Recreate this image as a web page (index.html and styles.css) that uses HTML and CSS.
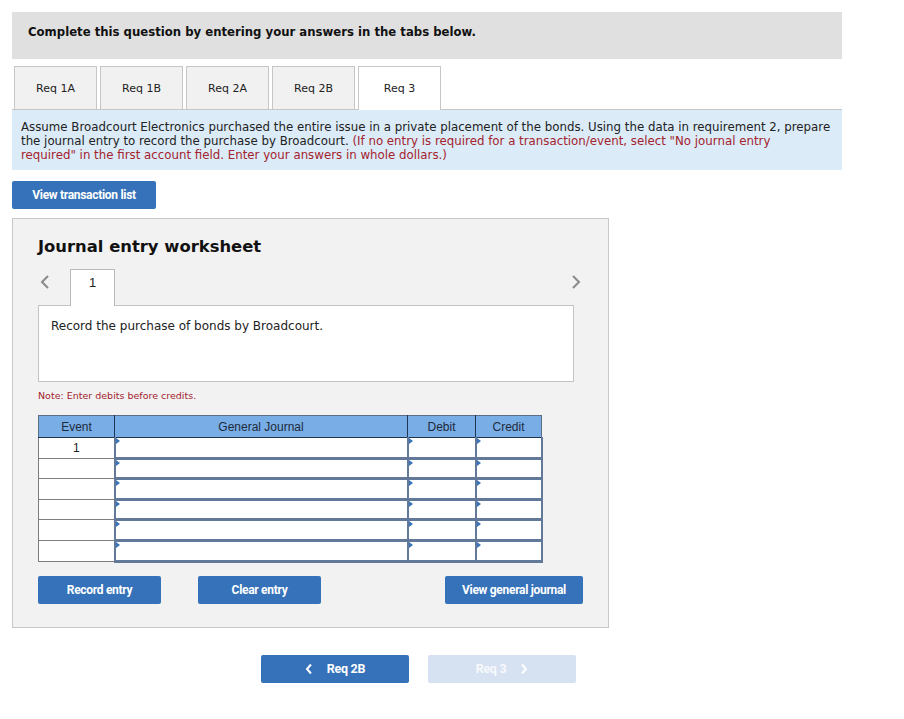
FILE: index.html
```html
<!DOCTYPE html>
<html lang="en">
<head>
<meta charset="utf-8">
<title>Journal entry worksheet</title>
<link rel="stylesheet" href="styles.css">
</head>
<body>
<div class="page">
  <div class="banner">Complete this question by entering your answers in the tabs below.</div>

  <div class="tabs">
    <div class="tab">Req 1A</div>
    <div class="tab">Req 1B</div>
    <div class="tab">Req 2A</div>
    <div class="tab">Req 2B</div>
    <div class="tab active">Req 3</div>
  </div>

  <div class="instructions">Assume Broadcourt Electronics purchased the entire issue in a private placement of the bonds. Using the data in requirement 2, prepare the journal entry to record the purchase by Broadcourt. <span class="red">(If no entry is required for a transaction/event, select "No journal entry<br>required" in the first account field. Enter your answers in whole dollars.)</span></div>

  <button class="btn btn-list">View transaction list</button>

  <div class="panel">
    <h2 class="panel-title">Journal entry worksheet</h2>
    <div class="entry-nav">
      <svg class="chev chev-left" width="12" height="16" viewBox="0 0 12 16"><polyline points="9,2 3,8 9,14" fill="none" stroke="#8a8a8a" stroke-width="2"/></svg>
      <div class="entry-tab">1</div>
      <div class="spacer"></div>
      <svg class="chev chev-right" width="12" height="16" viewBox="0 0 12 16"><polyline points="3,2 9,8 3,14" fill="none" stroke="#8a8a8a" stroke-width="2"/></svg>
    </div>
    <div class="desc">Record the purchase of bonds by Broadcourt.</div>
    <div class="note">Note: Enter debits before credits.</div>

    <table class="journal">
      <thead>
        <tr><th class="c-event">Event</th><th class="c-gj">General Journal</th><th class="c-dr">Debit</th><th class="c-cr">Credit</th></tr>
      </thead>
      <tbody>
        <tr><td class="ev">1</td><td class="in"></td><td class="in"></td><td class="in"></td></tr>
        <tr><td class="ev"></td><td class="in"></td><td class="in"></td><td class="in"></td></tr>
        <tr><td class="ev"></td><td class="in"></td><td class="in"></td><td class="in"></td></tr>
        <tr><td class="ev"></td><td class="in"></td><td class="in"></td><td class="in"></td></tr>
        <tr><td class="ev"></td><td class="in"></td><td class="in"></td><td class="in"></td></tr>
        <tr><td class="ev"></td><td class="in"></td><td class="in"></td><td class="in"></td></tr>
      </tbody>
    </table>

    <div class="actions">
      <button class="btn btn-action">Record entry</button>
      <button class="btn btn-action btn-clear">Clear entry</button>
      <button class="btn btn-action btn-view">View general journal</button>
    </div>
  </div>

  <div class="pager">
    <button class="btn btn-nav"><svg width="8" height="12" viewBox="0 0 8 12"><polyline points="6,1.5 2,6 6,10.5" fill="none" stroke="#fff" stroke-width="2"/></svg><span class="nav-label">Req 2B</span></button>
    <button class="btn btn-nav disabled"><span class="nav-label">Req 3</span><svg width="8" height="12" viewBox="0 0 8 12"><polyline points="2,1.5 6,6 2,10.5" fill="none" stroke="#fff" stroke-width="2"/></svg></button>
  </div>
</div>
</body>
</html>
```

FILE: styles.css
```css
* { box-sizing: border-box; }

body {
  margin: 0;
  background: #ffffff;
  font-family: "DejaVu Sans", Verdana, sans-serif;
  color: #222;
}

.page {
  width: 830px;
  margin: 12px 0 0 12px;
}

.banner {
  height: 47px;
  background: #e0e0e0;
  padding: 12px 16px 0;
  font-size: 11.7px;
  font-weight: bold;
  line-height: 16px;
  color: #111;
}

.tabs {
  display: flex;
  align-items: flex-end;
  margin-top: 7px;
  padding-left: 2px;
  border-bottom: 1px solid #c6c6c6;
  height: 44px;
}

.tab {
  width: 83px;
  height: 43px;
  margin-right: 3px;
  background: #f1f1f1;
  border: 1px solid #c6c6c6;
  border-bottom: none;
  display: flex;
  align-items: center;
  justify-content: center;
  font-size: 11px;
  color: #222;
}

.tab.active {
  background: #ffffff;
  height: 44px;
  margin-bottom: -1px;
  padding-bottom: 1px;
}

.instructions {
  background: #dcebf8;
  padding: 10px 9px 8px;
  font-size: 11.8px;
  line-height: 14px;
  color: #222;
  min-height: 59px;
}

.red { color: #a3232e; }

.btn {
  border: none;
  border-radius: 2px;
  background: #3572b9;
  color: #ffffff;
  font-family: Roboto, "Liberation Sans", Arial, sans-serif;
  font-weight: bold;
  font-size: 12px;
  letter-spacing: -0.3px;
  padding: 0;
  cursor: pointer;
}

.btn-list {
  display: block;
  width: 144px;
  height: 28px;
  margin-top: 11px;
}

.panel {
  width: 597px;
  margin-top: 9px;
  background: #f2f2f2;
  border: 1px solid #c8c8c8;
  padding: 18px 26px 23px 25px;
}

.panel-title {
  margin: 0;
  font-size: 16.4px;
  line-height: 20px;
  font-weight: bold;
  color: #111;
}

.entry-nav {
  display: flex;
  align-items: flex-start;
  margin-top: 12px;
  height: 37px;
  margin-bottom: -1px;
  position: relative;
  z-index: 1;
}

.chev { margin-top: 5px; }
.chev-left { margin-left: 1px; }
.chev-right { margin-right: 0; }

.entry-tab {
  margin-left: 19px;
  width: 45px;
  height: 37px;
  background: #ffffff;
  border: 1px solid #b9b9b9;
  border-bottom: none;
  text-align: center;
  padding-top: 5px;
  font-family: "Liberation Sans", Arial, sans-serif;
  font-size: 13px;
  color: #222;
}

.spacer { flex: 1; }

.desc {
  width: 536px;
  height: 77px;
  background: #ffffff;
  border: 1px solid #c3c3c3;
  padding: 13px 12px;
  font-size: 12px;
  line-height: 14px;
  color: #222;
}

.note {
  margin-top: 8px;
  font-size: 9.5px;
  line-height: 12px;
  color: #a3232e;
}

.journal {
  margin-top: 13px;
  border-collapse: collapse;
  font-family: "Liberation Sans", Arial, sans-serif;
  font-size: 12px;
  color: #222;
  table-layout: fixed;
  width: 503px;
}

.journal th {
  background: #79ade6;
  font-weight: normal;
  height: 22px;
  padding: 0;
  border: 1px solid #1e3550;
  border-top-color: #5b6e84;
  color: #1d2a3a;
}

.journal .c-event { width: 76px; border-left-color: #5b6e84; }
.journal .c-gj { width: 293px; }
.journal .c-dr { width: 68px; }
.journal .c-cr { width: 66px; border-right-color: #5b6e84; }

.journal td {
  height: 20.6px;
  padding: 0;
  background: #ffffff;
}

.journal td.ev {
  border: 1px solid #7d7d7d;
  text-align: center;
}

.journal td.in {
  position: relative;
  border-top: 3px solid #62799a;
  border-bottom: 3px solid #62799a;
  border-left: 2px solid #62799a;
  border-right: 2px solid #62799a;
}

.journal tbody tr:first-child td.in { border-top: 1px solid #1e3550; }

.journal td.in::before {
  content: "";
  position: absolute;
  left: 0;
  top: 0;
  border-left: 4px solid #3a74b8;
  border-top: 3px solid transparent;
  border-bottom: 3px solid transparent;
}

.actions {
  display: flex;
  margin-top: 13px;
}

.btn-action {
  width: 123px;
  height: 28px;
}

.btn-clear { margin-left: 37px; }
.btn-view { margin-left: auto; width: 138px; margin-right: -1px; }

.pager {
  display: flex;
  gap: 19px;
  margin-top: 27px;
  padding-left: 249px;
}

.btn-nav {
  width: 148px;
  height: 28px;
  display: flex;
  align-items: center;
  justify-content: center;
  font-size: 12.5px;
}

.btn-nav svg { display: block; }

.btn-nav .nav-label { margin-left: 14px; }
.btn-nav.disabled .nav-label { margin-left: 0; margin-right: 14px; }

.btn-nav.disabled {
  background: #d6e1f1;
  color: #f7f9fc;
  cursor: default;
}
```
